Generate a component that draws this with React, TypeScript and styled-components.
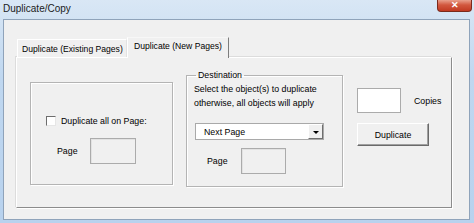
import React from "react";
import styled, { createGlobalStyle } from "styled-components";

const GlobalStyle = createGlobalStyle`
  html, body { margin: 0; padding: 0; }
  body {
    width: 474px;
    height: 223px;
    overflow: hidden;
    font-family: "Liberation Sans", Arial, sans-serif;
  }
`;

const Window = styled.div`
  width: 474px;
  height: 223px;
  box-sizing: border-box;
  display: flex;
  flex-direction: column;
  padding: 0 4px 3px 3px;
  background: linear-gradient(180deg, #d9e7f5 0%, #bfd7f0 35%, #b8d2ee 100%);
`;

const TitleBar = styled.div`
  height: 19px;
  display: flex;
  align-items: flex-start;
  justify-content: space-between;
`;

const Title = styled.span`
  font-size: 10px;
  line-height: 17px;
  color: #1b1b1b;
`;

const CloseButton = styled.div`
  width: 35px;
  height: 12px;
  margin-right: -2px;
  box-sizing: border-box;
  display: flex;
  align-items: center;
  justify-content: center;
  border: 1px solid #7b2a1c;
  border-top: none;
  border-radius: 0 0 4px 4px;
  background: linear-gradient(180deg, #e9a08c 0%, #d2583f 45%, #c13a22 100%);
  color: #fff;
  font-size: 9px;
  font-weight: bold;
  line-height: 1;
`;

const Client = styled.div`
  flex: 1;
  background: #f0f0f0;
  border: 1px solid #8fa3ba;
  padding: 17px 0 0 12px;
  font-size: 8.8px;
  color: #000;
`;

const TabStrip = styled.div`
  display: flex;
  align-items: flex-end;
  height: 20px;
  padding-left: 1px;
`;

const Tab = styled.div<{ $active?: boolean }>`
  box-sizing: border-box;
  display: flex;
  align-items: center;
  font-size: 8.6px;
  white-space: nowrap;
  position: relative;
  background: #f0f0f0;
  ${(p) =>
    p.$active
      ? `
    height: 21px;
    margin-bottom: -1px;
    padding: 0 6px 4px 6px;
    width: 102px;
    border-left: 1px solid #fff;
    border-top: 1px solid #f7f7f7;
    border-right: 1px solid #7d7d7d;
    z-index: 1;
  `
      : `
    height: 18px;
    width: 110px;
    padding: 0 4px;
    border-left: 1px solid #fff;
    border-top: 1px solid #fff;
    border-right: 1px solid #e2e2e2;
  `}
`;

const Panel = styled.div`
  width: 436px;
  height: 151px;
  box-sizing: border-box;
  display: flex;
  align-items: flex-start;
  padding-left: 13px;
  border-top: 1px solid #fff;
  border-left: 1px solid #fff;
  border-right: 1px solid #8c8c8c;
  border-bottom: 1px solid #8c8c8c;
  box-shadow: 1px 1px 0 #fff, -1px -1px 0 #dcdcdc;
`;

const GroupBox = styled.div`
  width: 143px;
  height: 103px;
  box-sizing: border-box;
  margin-top: 24px;
  border: 1px solid #b4b4b4;
  box-shadow: inset 1px 1px 0 #fff, 1px 1px 0 #fff;
  padding: 32px 0 0 15px;
  display: flex;
  flex-direction: column;
`;

const CheckRow = styled.label`
  display: flex;
  align-items: center;
  gap: 5px;
  line-height: 12px;
`;

const CheckBox = styled.span`
  width: 10px;
  height: 10px;
  box-sizing: border-box;
  background: #fff;
  border-top: 1px solid #6d6d6d;
  border-left: 1px solid #6d6d6d;
  border-right: 1px solid #e6e6e6;
  border-bottom: 1px solid #e6e6e6;
`;

const FieldRow = styled.div<{ $indent: number; $labelWidth: number; $top?: number }>`
  display: flex;
  align-items: center;
  margin-top: ${(p) => p.$top ?? 0}px;
  padding-left: ${(p) => p.$indent}px;
  & > span {
    width: ${(p) => p.$labelWidth}px;
  }
`;

const TextBox = styled.div<{ $white?: boolean; $w: number; $h: number }>`
  width: ${(p) => p.$w}px;
  height: ${(p) => p.$h}px;
  box-sizing: border-box;
  background: ${(p) => (p.$white ? "#fff" : "#f0f0f0")};
  border: 1px solid #ababab;
  box-shadow: ${(p) => (p.$white ? "none" : "inset 1px 1px 0 #e2e2e2")};
`;

const Fieldset = styled.fieldset`
  width: 157px;
  box-sizing: border-box;
  margin: 11px 0 0 13px;
  padding: 0 0 12px 7px;
  border: 1px solid #b4b4b4;
  box-shadow: inset 1px 1px 0 #fff, 1px 1px 0 #fff;
`;

const Legend = styled.legend`
  margin-left: 2px;
  padding: 0 2px;
  line-height: 12px;
`;

const Hint = styled.p`
  margin: 1px 0 0 0;
  line-height: 14px;
  white-space: nowrap;
`;

const Select = styled.div`
  width: 129px;
  height: 17px;
  box-sizing: border-box;
  margin: 13px 0 8px 1px;
  display: flex;
  align-items: stretch;
  background: #fff;
  border: 1px solid #a9a9a9;
`;

const SelectValue = styled.span`
  flex: 1;
  display: flex;
  align-items: center;
  padding-left: 8px;
`;

const DropButton = styled.span`
  width: 15px;
  box-sizing: border-box;
  display: flex;
  align-items: center;
  justify-content: center;
  background: #f0f0f0;
  border-top: 1px solid #fff;
  border-left: 1px solid #fff;
  border-right: 1px solid #6f6f6f;
  border-bottom: 1px solid #6f6f6f;
  &::after {
    content: "";
    border-left: 3px solid transparent;
    border-right: 3px solid transparent;
    border-top: 3px solid #000;
    margin-top: 1px;
  }
`;

const Side = styled.div`
  margin: 30px 0 0 14px;
  display: flex;
  flex-direction: column;
  gap: 10px;
`;

const CopiesRow = styled.div`
  display: flex;
  align-items: center;
  gap: 13px;
`;

const Button = styled.button`
  width: 72px;
  height: 23px;
  box-sizing: border-box;
  padding: 0;
  font: inherit;
  color: #000;
  background: #f0f0f0;
  border-top: 1px solid #fff;
  border-left: 1px solid #fff;
  border-right: 1px solid #6a6a6a;
  border-bottom: 1px solid #6a6a6a;
  box-shadow: inset -1px -1px 0 #a0a0a0;
`;

export default function App() {
  return (
    <>
      <GlobalStyle />
      <Window>
        <TitleBar>
          <Title>Duplicate/Copy</Title>
          <CloseButton>✕</CloseButton>
        </TitleBar>
        <Client>
          <TabStrip>
            <Tab>Duplicate (Existing Pages)</Tab>
            <Tab $active>Duplicate (New Pages)</Tab>
          </TabStrip>
          <Panel>
            <GroupBox>
              <CheckRow>
                <CheckBox />
                Duplicate all on Page:
              </CheckRow>
              <FieldRow $indent={11} $labelWidth={33} $top={11}>
                <span>Page</span>
                <TextBox $w={46} $h={26} />
              </FieldRow>
            </GroupBox>
            <Fieldset>
              <Legend>Destination</Legend>
              <Hint>
                Select the object(s) to duplicate
                <br />
                otherwise, all objects will apply
              </Hint>
              <Select>
                <SelectValue>Next Page</SelectValue>
                <DropButton />
              </Select>
              <FieldRow $indent={13} $labelWidth={34}>
                <span>Page</span>
                <TextBox $w={45} $h={26} />
              </FieldRow>
            </Fieldset>
            <Side>
              <CopiesRow>
                <TextBox $white $w={44} $h={25} />
                <span>Copies</span>
              </CopiesRow>
              <Button>Duplicate</Button>
            </Side>
          </Panel>
        </Client>
      </Window>
    </>
  );
}
